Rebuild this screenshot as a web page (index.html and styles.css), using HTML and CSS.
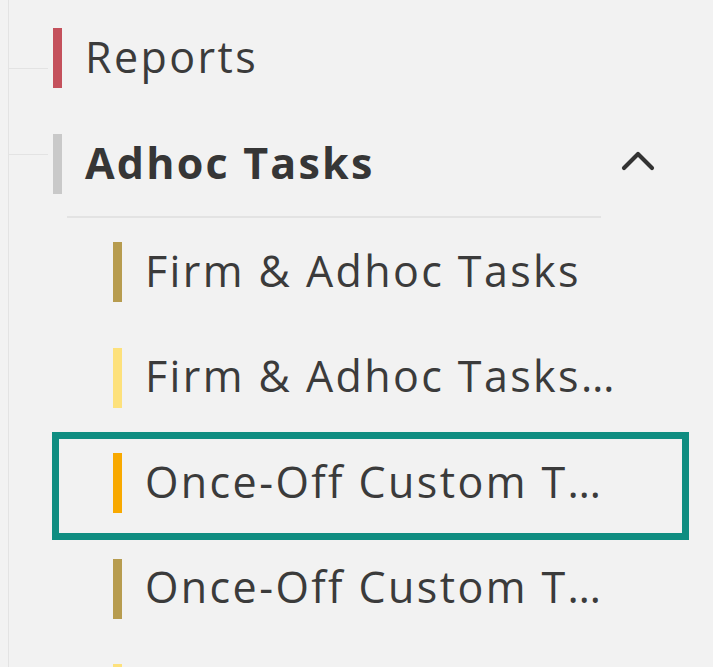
FILE: index.html
```html
<!DOCTYPE html>
<html lang="en">
<head>
<meta charset="utf-8">
<title>Sidebar</title>
<link rel="stylesheet" href="styles.css">
</head>
<body>
<nav class="sidebar">
  <div class="item item--reports">
    <span class="bar bar--red"></span>
    <span class="label">Reports</span>
  </div>
  <div class="item item--group">
    <span class="bar bar--gray"></span>
    <span class="label label--bold">Adhoc Tasks</span>
    <svg class="chevron" width="36" height="22" viewBox="0 0 36 22" aria-hidden="true">
      <polyline points="3,18 17,4 31,18" fill="none" stroke="#333" stroke-width="4.2" stroke-linecap="round" stroke-linejoin="round"/>
    </svg>
  </div>
  <div class="separator"></div>
  <ul class="sublist">
    <li class="subitem"><span class="bar bar--gold"></span><span class="label">Firm &amp; Adhoc Tasks</span></li>
    <li class="subitem"><span class="bar bar--yellow"></span><span class="label">Firm &amp; Adhoc Tasks…</span></li>
    <li class="subitem subitem--selected"><span class="bar bar--orange"></span><span class="label">Once-Off Custom T…</span></li>
    <li class="subitem"><span class="bar bar--gold"></span><span class="label">Once-Off Custom T…</span></li>
    <li class="subitem"><span class="bar bar--yellow"></span></li>
  </ul>
</nav>
</body>
</html>
```
FILE: styles.css
```css
html, body {
  margin: 0;
  padding: 0;
  background: #f2f2f2;
  height: 100%;
  overflow: hidden;
}

body {
  font-family: "Open Sans", "Liberation Sans", sans-serif;
  color: #3a3a3a;
}

.sidebar {
  margin-left: 8px;
  border-left: 1px solid #e3e3e3;
  min-height: 100vh;
  padding-top: 28px;
  box-sizing: border-box;
}

.item {
  position: relative;
  display: flex;
  align-items: center;
  height: 60px;
  padding-left: 44px;
  padding-right: 56px;
}

.item::before {
  content: "";
  position: absolute;
  left: 0;
  width: 39px;
  height: 1px;
  background: #e3e3e3;
}

.item--reports::before { top: 40px; }
.item--group::before { top: 20px; }

.item--group {
  margin-top: 46px;
}

.bar {
  flex: none;
  width: 9px;
  height: 60px;
  margin-right: 23px;
}

.bar--red { background: #c4515c; }
.bar--gray { background: #c9c9c9; }
.bar--gold { background: #b79c4f; }
.bar--yellow { background: #fde17c; }
.bar--orange { background: #f8a900; }

.label {
  font-size: 43px;
  letter-spacing: 2.4px;
  white-space: nowrap;
  color: #3b3b3b;
  margin-bottom: 4px;
}

.label--bold {
  font-weight: 700;
  color: #363636;
  letter-spacing: 2.2px;
}

.chevron {
  margin-left: auto;
  margin-bottom: 7px;
  flex: none;
}

.separator {
  margin: 22px 112px 0 58px;
  height: 2px;
  background: #e3e3e3;
}

.sublist {
  list-style: none;
  margin: 24px 0 0;
  padding: 0 0 0 104px;
}

.subitem {
  position: relative;
  display: flex;
  align-items: center;
  height: 60px;
  margin-bottom: 45.5px;
}

.subitem--selected::after {
  content: "";
  position: absolute;
  top: -21px;
  bottom: -27px;
  left: -61px;
  width: 637px;
  box-sizing: border-box;
  border: 7px solid #0f8d81;
  pointer-events: none;
}
```
